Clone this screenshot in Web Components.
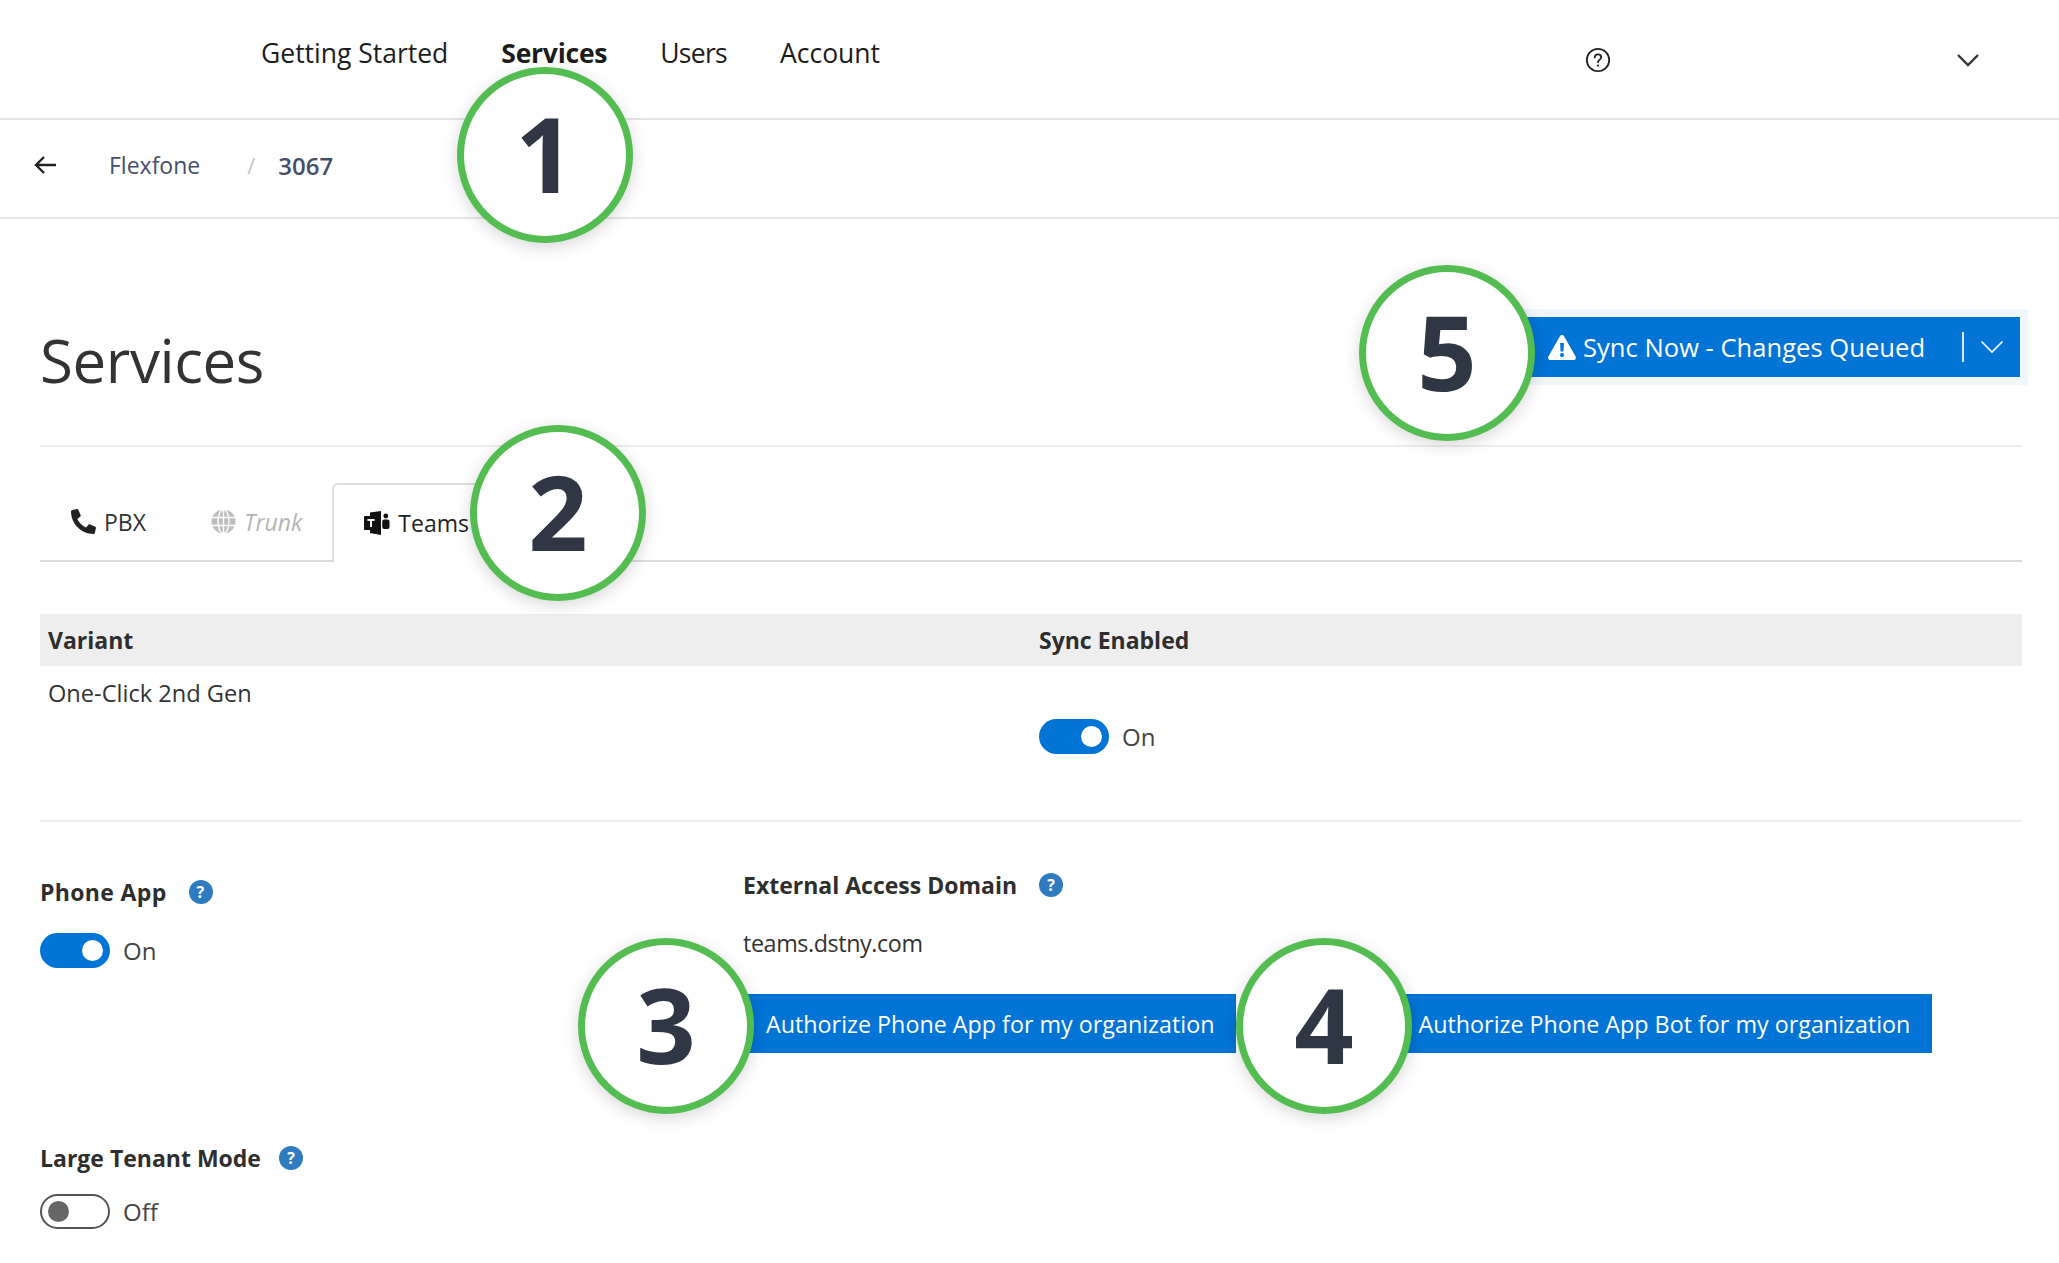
<!DOCTYPE html>
<html lang="en">
<head>
<meta charset="utf-8">
<title>Services</title>
<style>
html,body{margin:0;padding:0;background:#fff}
body{font-family:"Open Sans","Liberation Sans",sans-serif;font-size:25.5px;color:#222}
</style>
</head>
<body>
<app-root>
  <site-header>
    <nav-link>Getting Started</nav-link>
    <nav-link active>Services</nav-link>
    <nav-link style="letter-spacing:-.7px">Users</nav-link>
    <nav-link>Account</nav-link>
  </site-header>
  <crumb-bar current="3067">Flexfone</crumb-bar>
  <page-main>
    <title-row>Services</title-row>
    <tab-bar></tab-bar>
    <variant-table></variant-table>
    <settings-form></settings-form>
  </page-main>
  <call-out n="1" style="left:457px;top:67px"></call-out>
  <call-out n="2" style="left:470px;top:425px"></call-out>
  <call-out n="3" style="left:578px;top:938px"></call-out>
  <call-out n="4" style="left:1236px;top:938px"></call-out>
  <call-out n="5" style="left:1359px;top:265px"></call-out>
</app-root>
<script>
function def(name, html){
  customElements.define(name, class extends HTMLElement{
    constructor(){
      super();
      this.attachShadow({mode:'open'});
    }
    connectedCallback(){
      if(this._done) return; this._done=true;
      this.shadowRoot.innerHTML = typeof html==='function'? html(this): html;
    }
  });
}
const FONT='"Open Sans","Liberation Sans",sans-serif';

def('app-root',`<style>:host{display:block;position:relative;width:2059px;height:1263px;overflow:hidden;background:#fff;font-family:${FONT}}</style><slot></slot>`);

def('site-header',`<style>
:host{display:flex;align-items:center;height:118px;border-bottom:2px solid #e4e4e8;padding-left:261px;box-sizing:content-box}
.links{display:flex;gap:53px;margin-top:-12px}
.right{margin-left:auto;display:flex;align-items:center;padding-right:79px;gap:345px;margin-top:2px}
svg{display:block}
</style>
<div class="links"><slot></slot></div>
<div class="right">
<svg width="26" height="26" viewBox="0 0 26 26" fill="none" stroke="#222" stroke-width="1.8"><circle cx="13" cy="13" r="11.2"/><path d="M9.8 10.4c0-1.9 1.4-3 3.2-3s3.2 1.1 3.2 2.8c0 2.4-3.2 2.4-3.2 5" stroke-linecap="round"/><circle cx="13" cy="18.6" r="1.1" fill="#222" stroke="none"/></svg>
<svg width="24" height="14" viewBox="0 0 24 14" fill="none" stroke="#333" stroke-width="2.4"><path d="M2 2l10 10L22 2"/></svg>
</div>`);

def('nav-link',h=>`<style>
:host{display:block;font-size:26.5px;line-height:36px;color:#1c1c1c;font-weight:${h.hasAttribute('active')?700:400};letter-spacing:${h.hasAttribute('active')?'-.25px':'0'}}
</style><slot></slot>`);

def('crumb-bar',h=>`<style>
:host{display:flex;align-items:center;height:99px;box-sizing:border-box;padding-bottom:7px;border-bottom:2px solid #e7e7ea;padding-left:33px;font-size:23px;color:#44506a}
svg{display:block;margin-right:52px}
.sep{color:#c4c4c8;margin:0 23px 0 47px;font-size:22px}
b{font-weight:600;color:#44506a;font-size:24px}
</style>
<svg width="24" height="20" viewBox="0 0 24 20" fill="none" stroke="#222" stroke-width="2.4"><path d="M23 10H3M11 2l-8 8 8 8"/></svg>
<span><slot></slot></span><span class="sep">/</span><b>${h.getAttribute('current')}</b>`);

def('page-main',`<style>:host{display:block;padding:0 37px 0 40px}</style><slot></slot>`);

def('title-row',`<style>
:host{display:flex;height:226px;align-items:flex-start;justify-content:space-between;border-bottom:2px solid #eeeeee;box-sizing:content-box}
h1{margin:104px 0 0;font-size:60px;line-height:74px;font-weight:400;color:#333;letter-spacing:-.4px}
.bar{margin-top:98px;display:flex;margin-right:2px}
</style>
<h1><slot></slot></h1>
<div class="bar"><sync-button></sync-button></div>`);

def('sync-button',`<style>
:host{display:flex;align-items:center;width:494px;height:60px;background:#0174d6;color:#fff;box-shadow:0 0 0 8px #eff6fc;font-size:25.6px;box-sizing:border-box;padding-left:22px}
svg{display:block}
.t{margin-left:7px;width:379px;white-space:nowrap}
.d{width:2px;height:30px;background:#fff;opacity:.85}
.c{margin-left:16px}
</style>
<svg width="28" height="25" viewBox="0 0 28 25"><path fill="#fff" fill-rule="evenodd" d="M14 0c.9 0 1.7.5 2.1 1.2l11.5 20.3c.9 1.6-.2 3.5-2.1 3.5h-23C.6 25-.5 23.1.4 21.5L11.9 1.2C12.3.5 13.1 0 14 0zm-1.9 8l.5 8.6h2.8l.5-8.6h-3.8zM14 18a2.1 2.1 0 100 4.2 2.1 2.1 0 000-4.2z"/></svg>
<span class="t">Sync Now - Changes Queued</span><span class="d"></span>
<svg class="c" width="24" height="14" viewBox="0 0 24 14" fill="none" stroke="#fff" stroke-width="1.6"><path d="M1.5 1.5L12 12 22.5 1.5"/></svg>`);

const phone=`<svg width="25" height="25" viewBox="0 0 512 512"><path fill="#222" transform="matrix(-1 0 0 1 512 0)" d="M493.4 24.6l-104-24c-11.3-2.6-22.9 3.3-27.5 13.9l-48 112c-4.2 9.8-1.4 21.3 6.9 28l60.6 49.6c-36 76.7-98.9 140.5-177.2 177.2l-49.6-60.6c-6.8-8.3-18.2-11.1-28-6.9l-112 48C3.9 366.5-2 378.1.6 389.4l24 104C27.1 504.2 36.7 512 48 512c256.1 0 464-207.5 464-464 0-11.2-7.7-20.9-18.6-23.4z"/></svg>`;
const globe=`<svg width="25" height="25" viewBox="0 0 25 25"><circle cx="12.5" cy="12.5" r="12" fill="#bdbdbd"/><g fill="none" stroke="#fff" stroke-width="1.4"><ellipse cx="12.5" cy="12.5" rx="5.5" ry="12"/><path d="M12.5 0v25M1 8.5h23M1 16.5h23"/></g></svg>`;
const teams=`<svg width="26" height="24" viewBox="0 0 26 24"><path fill="#111" d="M6 1.5L17 0v24L6 22z"/><circle cx="21.8" cy="5" r="2.4" fill="#111"/><rect x="18.2" y="8.5" width="7.3" height="9.5" rx="2" fill="#111"/><rect x="0" y="5" width="14" height="14" rx="1" fill="#111"/><rect x="3.4" y="8" width="7.2" height="1.9" fill="#fff"/><rect x="6.1" y="8" width="1.9" height="8" fill="#fff"/></svg>`;

def('tab-bar',`<style>
:host{display:flex;align-items:stretch;height:77px;margin-top:36px;border-bottom:2px solid #ddd;box-sizing:content-box;font-size:23px}
.tab{display:flex;align-items:center;gap:8px}
.pbx{margin-left:31px;color:#333}
.trunk{margin-left:65px;color:#b4b4b4;font-style:italic}
.teams{margin-left:30px;width:226px;padding-left:30px;box-sizing:border-box;border:2px solid #ddd;border-bottom:0;border-radius:6px 6px 0 0;background:#fff;margin-bottom:-2px;padding-bottom:2px;color:#222}
svg{display:block}
</style>
<div class="tab pbx">${phone}<span>PBX</span></div>
<div class="tab trunk">${globe}<span>Trunk</span></div>
<div class="tab teams">${teams}<span>Teams</span></div>`);

def('variant-table',`<style>
:host{display:block;margin-top:52px;font-size:23.6px;color:#333;border-bottom:2px solid #eee;height:206px}
.row{display:grid;grid-template-columns:999px 1fr}
.head{background:#eee;height:52px;align-items:center;font-weight:700;font-size:23px;color:#2e2e2e}
.head div:first-child,.body div:first-child{padding-left:8px}
.head .c2{padding-left:0}
.body{padding-top:9px}
.body div:first-child{line-height:36px}
.c2t{margin-top:43px}
</style>
<div class="row head"><div>Variant</div><div class="c2">Sync Enabled</div></div>
<div class="row body"><div>One-Click 2nd Gen</div><div><x-toggle class="c2t" on>On</x-toggle></div></div>`);

def('x-toggle',h=>{const on=h.hasAttribute('on');return `<style>
:host{display:flex;align-items:center;gap:13px;font-size:24px;color:#444;height:36px}
.sw{width:70px;height:35px;border-radius:18px;box-sizing:border-box;position:relative;flex:none;${on?'background:#0174d6':'background:#fff;border:2px solid #555'}}
.k{position:absolute;width:21px;height:21px;border-radius:50%;top:${on?7:5}px;${on?'right:7px;background:#fff':'left:6px;background:#666'}}
</style><span class="sw"><span class="k"></span></span><span><slot></slot></span>`});

def('help-dot',`<style>
:host{display:inline-flex;align-items:center;justify-content:center;width:24px;height:24px;border-radius:50%;background:#2f7bbf;color:#fff;font-size:16px;font-weight:700;line-height:1}
</style>?`);

def('field-label',`<style>
:host{display:flex;align-items:center;gap:var(--g,22px);font-size:23px;font-weight:700;color:#2e2e2e;height:36px;white-space:nowrap}
</style><slot></slot><help-dot></help-dot>`);

def('auth-button',`<style>
:host{display:flex;align-items:center;height:59px;padding:0 22px;background:#0174d6;color:#fff;font-size:23.3px;white-space:nowrap}
</style><slot></slot>`);

def('settings-form',`<style>
:host{display:grid;grid-template-columns:703px 1fr;color:#333}
.l{padding-top:52px}
.r{padding-top:45px}
.t1{margin-top:22px}
.t2{margin-top:17px}
.lt{margin-top:172px}
.val{margin-top:22px;font-size:23.3px;letter-spacing:-.4px;line-height:36px}
.btns{display:flex;gap:160px;margin-top:33px;margin-left:1px}
</style>
<div class="l">
  <field-label style="letter-spacing:.35px">Phone App</field-label>
  <x-toggle class="t1" on>On</x-toggle>
  <field-label class="lt" style="--g:18px">Large Tenant Mode</field-label>
  <x-toggle class="t2">Off</x-toggle>
</div>
<div class="r">
  <field-label>External Access Domain</field-label>
  <div class="val">teams.dstny.com</div>
  <div class="btns"><auth-button>Authorize Phone App for my organization</auth-button><auth-button>Authorize Phone App Bot for my organization</auth-button></div>
</div>`);

def('call-out',h=>`<style>
:host{position:absolute;display:flex;align-items:center;justify-content:center;width:176px;height:176px;box-sizing:border-box;border:7.5px solid #54bd52;border-radius:50%;background:#fff;box-shadow:0 4px 16px rgba(0,0,0,.16);color:#2f3744;font-size:104px;font-weight:700;line-height:1;padding-bottom:5px;font-family:${FONT}}
</style>${h.getAttribute('n')}`);
</script>
</body>
</html>
